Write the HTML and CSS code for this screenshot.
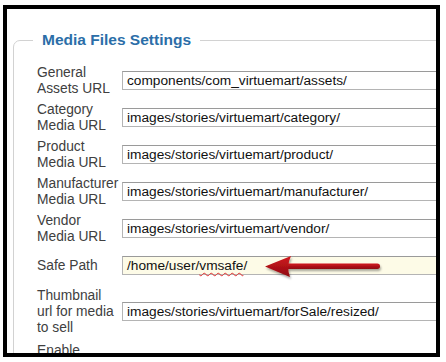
FILE: index.html
```html
<!DOCTYPE html>
<html>
<head>
    <meta charset="utf-8" />
    <title>Media Files Settings</title>
    <link rel="stylesheet" href="styles.css">
</head>
<body class="body">
    <div class="frame">
        <fieldset class="settings">
            <legend class="title">Media Files Settings</legend>
            <div class="form">
                <div class="name">General<br />Assets URL</div>
                <div class="field">components/com_virtuemart/assets/</div>

                <div class="name">Category<br />Media URL</div>
                <div class="field">images/stories/virtuemart/category/</div>

                <div class="name">Product<br />Media URL</div>
                <div class="field">images/stories/virtuemart/product/</div>

                <div class="name">Manufacturer<br />Media URL</div>
                <div class="field">images/stories/virtuemart/manufacturer/</div>

                <div class="name">Vendor<br />Media URL</div>
                <div class="field">images/stories/virtuemart/vendor/</div>

                <div class="name">Safe Path</div>
                <div class="field safe">/home/user/<span class="typo">vmsafe</span>/
                    <svg class="arrow" width="124" height="28" viewBox="0 0 124 28">
                        <defs>
                            <linearGradient id="red" x1="0" y1="0" x2="0" y2="1">
                                <stop offset="0" stop-color="#d21820" />
                                <stop offset="1" stop-color="#8e0b10" />
                            </linearGradient>
                            <filter id="shadow" x="-10%" y="-30%" width="120%" height="170%">
                                <feDropShadow dx="1" dy="2" stdDeviation="1.2" flood-color="#000" flood-opacity="0.35" />
                            </filter>
                        </defs>
                        <g filter="url(#shadow)" fill="url(#red)">
                            <rect x="20" y="10.5" width="97" height="5.5" rx="2.7" />
                            <path d="M2 13.5 L28 3 Q23 13 27 24 Z" />
                        </g>
                    </svg>
                </div>

                <div class="name">Thumbnail<br />url for media<br />to sell</div>
                <div class="field">images/stories/virtuemart/forSale/resized/</div>

                <div class="name last">Enable</div>
                <div></div>
            </div>
        </fieldset>
    </div>
</body>
</html>
```

FILE: styles.css
```css
.body {
    margin: 0;
    background-color: white;
}
.frame {
    box-sizing: border-box;
    width: 437px;
    height: 352px;
    margin: 5px 0 0 3px;
    border: 4px solid black;
    background-color: white;
    overflow: hidden;
}
.settings {
    width: 470px;
    margin: 22px 0 0 6px;
    padding: 13px 0 0 23px;
    border: 1px solid #d2d2d2;
    border-radius: 7px;
}
.title {
    margin-left: -4px;
    padding: 0 9px;
    font-family: "Liberation Sans", Arial, sans-serif;
    font-size: 15.5px;
    font-weight: bold;
    color: #2b6ea8;
}
.form {
    display: grid;
    grid-template-columns: 85px 330px;
    grid-template-rows: repeat(6, 37px) 55px 20px;
    align-items: center;
}
.name {
    font-family: "Liberation Sans", Arial, sans-serif;
    font-size: 13.8px;
    line-height: 16px;
    color: #404040;
}
.last {
    align-self: end;
}
.field {
    position: relative;
    box-sizing: border-box;
    height: 19px;
    padding: 0 4px;
    border: 1px solid #b4b4b4;
    border-top-color: #9a9a9a;
    font-family: "Liberation Sans", Arial, sans-serif;
    font-size: 13.7px;
    line-height: 17px;
    color: #111;
    white-space: nowrap;
}
.safe {
    background-color: #fdfbe7;
}
.typo {
    text-decoration: underline wavy #e03030;
    text-decoration-thickness: 1px;
    text-underline-offset: 2px;
}
.arrow {
    position: absolute;
    left: 140px;
    top: -4px;
}
```
